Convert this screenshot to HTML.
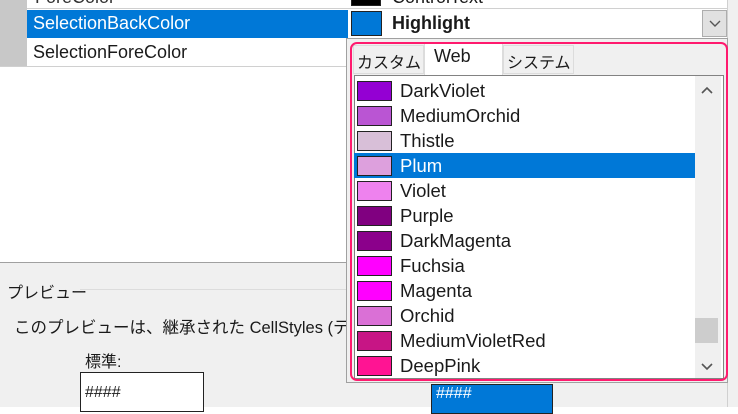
<!DOCTYPE html>
<html><head><meta charset="utf-8"><style>
*{margin:0;padding:0;box-sizing:border-box}
body{width:738px;height:407px;overflow:hidden;background:#fff;font-family:"Liberation Sans","Noto Sans CJK JP",sans-serif;font-size:16px;color:#1a1a1a;position:relative}
.a{position:absolute}
.sw{position:absolute;border:1px solid #222}
.item{position:absolute;left:354px;width:341px;height:25px}
.item .sw{left:3px;top:3px;width:35px;height:20px}
.item span{position:absolute;left:46px;top:2px;font-size:18.5px;line-height:22px}
</style></head><body>
<div class="a" style="left:0;top:0;width:27px;height:66px;background:#c8c8c8"></div>
<div class="a" style="left:27px;top:0;width:321px;height:9px;background:#fff;border-bottom:1px solid #d0d0d0"></div>
<div class="a" style="left:35px;top:-13px;color:#333;font-size:18px">ForeColor</div>
<div class="a" style="left:27px;top:10px;width:321px;height:28px;background:#0078d7"></div>
<div class="a" style="left:33px;top:13px;color:#fff;font-size:18px">SelectionBackColor</div>
<div class="a" style="left:27px;top:66px;width:321px;height:1px;background:#d0d0d0"></div>
<div class="a" style="left:33px;top:42px;font-size:18px">SelectionForeColor</div>
<div class="a" style="left:0;top:66px;width:27px;height:1px;background:#d0d0d0"></div>
<div class="a" style="left:348px;top:0;width:380px;height:9px;background:#fff;border-bottom:1px solid #d0d0d0"></div>
<div class="sw" style="left:351px;top:-4px;width:30px;height:10px;background:#000"></div>
<div class="a" style="left:392px;top:-13px;font-size:18px">ControlText</div>
<div class="sw" style="left:351px;top:11px;width:31px;height:25px;background:#0078d7"></div>
<div class="a" style="left:392px;top:13px;font-weight:bold;font-size:18px">Highlight</div>
<div class="a" style="left:702px;top:10px;width:25px;height:27px;background:#e1e1e1;border:1px solid #adadad"></div>
<svg class="a" style="left:708px;top:18px" width="14" height="10"><path d="M2 3l5 5 5-5" stroke="#555" stroke-width="1.4" fill="none"/></svg>
<div class="a" style="left:727px;top:0;width:11px;height:407px;background:#f0f0f0;border-left:1px solid #d0d0d0"></div>
<div class="a" style="left:0;top:262px;width:727px;height:145px;background:#f0f0f0;border-top:1px solid #a0a0a0"></div>
<div class="a" style="left:7px;top:279px;font-size:16px">プレビュー</div>
<div class="a" style="left:80px;top:289px;width:280px;height:1px;background:#dcdcdc"></div>
<div class="a" style="left:14px;top:314px;font-size:16.5px">このプレビューは、継承された CellStyles (テーブル</div>
<div class="a" style="left:85px;top:348px;font-size:16px">標準:</div>
<div class="a" style="left:80px;top:372px;width:124px;height:40px;background:#fff;border:1px solid #222"></div>
<div class="a" style="left:85px;top:384px;font-size:16px">####</div>
<div class="a" style="left:431px;top:384px;width:122px;height:30px;background:#0078d7;border:1px solid #222"></div>
<div class="a" style="left:436px;top:385px;font-size:16px;color:#fff">####</div>
<div class="a" style="left:346px;top:38px;width:382px;height:345px;background:#f0f0f0;border:1px solid #a0a0a0"></div>
<div class="a" style="left:350px;top:42px;width:378px;height:339px;border:2px solid #ff1a6e;border-radius:7px;z-index:5"></div>
<div class="a" style="left:353px;top:45px;width:71px;height:29px;background:#f0f0f0;border:1px solid #dcdcdc"></div>
<div class="a" style="left:357px;top:49px;font-size:16px">カスタム</div>
<div class="a" style="left:424px;top:43px;width:79px;height:32px;background:#fff;border:1px solid #dcdcdc;border-bottom:none"></div>
<div class="a" style="left:434px;top:46px;font-size:18px">Web</div>
<div class="a" style="left:503px;top:45px;width:71px;height:29px;background:#f0f0f0;border:1px solid #dcdcdc"></div>
<div class="a" style="left:507px;top:49px;font-size:16px">システム</div>
<div class="a" style="left:354px;top:75px;width:370px;height:304px;background:#fff;border:1px solid #828282"></div>
<div class="a" style="left:695px;top:76px;width:26px;height:302px;background:#f0f0f0"></div>
<div class="a" style="left:695px;top:318px;width:23px;height:25px;background:#cdcdcd"></div>
<svg class="a" style="left:700px;top:86px" width="14" height="10"><path d="M2 7l5-5 5 5" stroke="#555" stroke-width="1.6" fill="none"/></svg>
<svg class="a" style="left:700px;top:361px" width="14" height="10"><path d="M2 3l5 5 5-5" stroke="#555" stroke-width="1.6" fill="none"/></svg>
<div class="item" style="top:78px"><div class="sw" style="background:#9400d3"></div><span>DarkViolet</span></div>
<div class="item" style="top:103px"><div class="sw" style="background:#ba55d3"></div><span>MediumOrchid</span></div>
<div class="item" style="top:128px"><div class="sw" style="background:#d8bfd8"></div><span>Thistle</span></div>
<div class="item" style="top:153px;background:#0078d7"><div class="sw" style="background:#dda0dd"></div><span style="color:#fff">Plum</span></div>
<div class="item" style="top:178px"><div class="sw" style="background:#ee82ee"></div><span>Violet</span></div>
<div class="item" style="top:203px"><div class="sw" style="background:#800080"></div><span>Purple</span></div>
<div class="item" style="top:228px"><div class="sw" style="background:#8b008b"></div><span>DarkMagenta</span></div>
<div class="item" style="top:253px"><div class="sw" style="background:#ff00ff"></div><span>Fuchsia</span></div>
<div class="item" style="top:278px"><div class="sw" style="background:#ff00ff"></div><span>Magenta</span></div>
<div class="item" style="top:303px"><div class="sw" style="background:#da70d6"></div><span>Orchid</span></div>
<div class="item" style="top:328px"><div class="sw" style="background:#c71585"></div><span>MediumVioletRed</span></div>
<div class="item" style="top:353px"><div class="sw" style="background:#ff1493"></div><span>DeepPink</span></div>
</body></html>
